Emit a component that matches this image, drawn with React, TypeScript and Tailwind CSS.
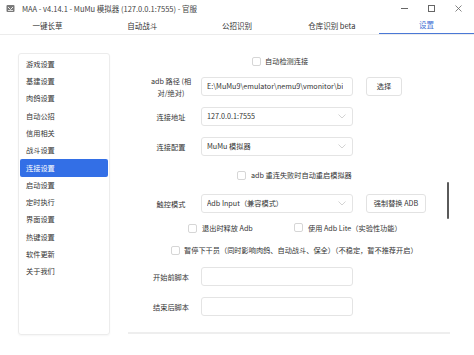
import React from "react";

const tabs = ["一键长草", "自动战斗", "公招识别", "仓库识别 beta", "设置"];
const menu = [
  "游戏设置",
  "基建设置",
  "肉鸽设置",
  "自动公招",
  "信用相关",
  "战斗设置",
  "连接设置",
  "启动设置",
  "定时执行",
  "界面设置",
  "热键设置",
  "软件更新",
  "关于我们",
];

const Chevron = () => (
  <svg width="8" height="5" viewBox="0 0 8 5" className="shrink-0">
    <path d="M0.5 0.5 L4 4 L7.5 0.5" fill="none" stroke="#c8c8c8" strokeWidth="0.8" />
  </svg>
);

const Box = () => <span className="w-[9px] h-[9px] shrink-0 rounded-[2px] border border-[#d6d6d6] bg-white" />;

const Check = ({ label, left, textGap = 5 }: { label: string; left: number; textGap?: number }) => (
  <div className="flex items-center h-full" style={{ paddingLeft: left, gap: textGap }}>
    <Box />
    <span className="whitespace-nowrap">{label}</span>
  </div>
);

const Label = ({ children }: { children: React.ReactNode }) => (
  <div className="ml-[31px] w-[60px] shrink-0 text-center leading-[12px]">{children}</div>
);

const Field = ({ text, select }: { text?: string; select?: boolean }) => (
  <div className="w-[152px] h-full shrink-0 flex items-center justify-between rounded-[3px] border border-[#e4e4e4] bg-white pl-[5px] pr-[6px] overflow-hidden">
    <span className="whitespace-nowrap overflow-hidden">{text}</span>
    {select && <Chevron />}
  </div>
);

const Btn = ({ children, w }: { children: React.ReactNode; w: string }) => (
  <div className={`ml-[13px] h-full shrink-0 flex items-center justify-center rounded-[3px] border border-[#e2e2e2] ${w}`}>
    {children}
  </div>
);

export default function App() {
  return (
    <div className="w-[474px] h-[355px] bg-white overflow-hidden relative text-[7.2px] text-[#333] font-['Noto_Sans_CJK_SC',sans-serif]">
      {/* title bar */}
      <div className="h-[17px] flex items-center">
        <svg width="9" height="9" viewBox="0 0 9 9" className="ml-[6px]">
          <rect x="0.5" y="1" width="8" height="7" rx="1" fill="#7a7a7a" />
          <path d="M2 3 L4.5 5.5 L7 3" fill="none" stroke="#eee" strokeWidth="1" />
          <rect x="2" y="6" width="5" height="1" fill="#ddd" />
        </svg>
        <span className="ml-[7px] text-[7.5px] text-[#444] whitespace-nowrap">
          MAA - v4.14.1 - MuMu 模拟器 (127.0.0.1:7555) - 官服
        </span>
        <div className="ml-auto flex items-center text-[#555]">
          <span className="w-[7px] h-px bg-[#666]" />
          <span className="ml-[20px] w-[7px] h-[7px] border border-[#666]" />
          <svg width="7" height="7" viewBox="0 0 7 7" className="ml-[20px] mr-[12px]">
            <path d="M0.5 0.5 L6.5 6.5 M6.5 0.5 L0.5 6.5" stroke="#666" strokeWidth="0.8" />
          </svg>
        </div>
      </div>

      {/* tabs */}
      <div className="h-[18px] grid grid-cols-5 border-b border-[#ececec] text-[7.5px]">
        {tabs.map((t, i) => (
          <div
            key={t}
            className={`flex items-center justify-center ${
              i === 4 ? "text-[#3f6fd4] border-b-[1.5px] border-[#4a78d6]" : ""
            }`}
          >
            {t}
          </div>
        ))}
      </div>

      <div className="flex h-[320px]">
        {/* side menu */}
        <div className="pl-[18px] pt-[18px]">
          <div className="w-[92px] h-[282px] rounded-[3px] border border-[#ececec] shadow-[0_1px_2px_rgba(0,0,0,0.04)] pt-[1.5px]">
            {menu.map((m, i) => (
              <div
                key={m}
                className={`h-[17.3px] flex items-center px-[6px] mx-px rounded-[2px] ${
                  i === 6 ? "bg-[#336fe6] text-white" : ""
                }`}
              >
                {m}
              </div>
            ))}
          </div>
        </div>

        {/* connection settings */}
        <div className="flex-1 flex flex-col">
          <div className="mt-[17px] h-[18px]">
            <Check label="自动检测连接" left={142} textGap={4} />
          </div>

          <div className="mt-[7px] h-[19px] flex items-center">
            <Label>
              adb 路径 (相
              <br />
              对/绝对)
            </Label>
            <Field text="E:\MuMu9\emulator\nemu9\vmonitor\bi" />
            <Btn w="w-[36px]">选择</Btn>
          </div>

          <div className="mt-[11px] h-[19px] flex items-center">
            <Label>连接地址</Label>
            <Field text="127.0.0.1:7555" select />
          </div>

          <div className="mt-[11px] h-[19px] flex items-center">
            <Label>连接配置</Label>
            <Field text="MuMu 模拟器" select />
          </div>

          <div className="mt-[10px] h-[18px]">
            <Check label="adb 重连失败时自动重启模拟器" left={127} />
          </div>

          <div className="mt-[10px] h-[19px] flex items-center">
            <Label>触控模式</Label>
            <Field text="Adb Input（兼容模式）" select />
            <Btn w="w-[60px]">强制替换 ADB</Btn>
          </div>

          <div className="mt-[6px] h-[18px] flex items-center">
            <div className="w-[184px] h-full shrink-0">
              <Check label="退出时释放 Adb" left={78} />
            </div>
            <div className="flex items-center gap-[5px]">
              <Box />
              <span className="whitespace-nowrap">使用 Adb Lite（实验性功能）</span>
            </div>
          </div>

          <div className="mt-[4px] h-[18px]">
            <Check label="暂停下干员（同时影响肉鸽、自动战斗、保全）（不稳定，暂不推荐开启）" left={61} textGap={4} />
          </div>

          <div className="mt-[8px] h-[19px] flex items-center">
            <Label>开始前脚本</Label>
            <Field />
          </div>

          <div className="mt-[11px] h-[19px] flex items-center">
            <Label>结束后脚本</Label>
            <Field />
          </div>

          <div className="mt-[16px] ml-[18px] w-[322px] h-[2px] bg-[#eeeeee]" />
        </div>
      </div>

      {/* scrollbar thumb */}
      <div className="absolute left-[447px] top-[182px] w-[2px] h-[37px] rounded-full bg-[#5a5a5a]" />
    </div>
  );
}
